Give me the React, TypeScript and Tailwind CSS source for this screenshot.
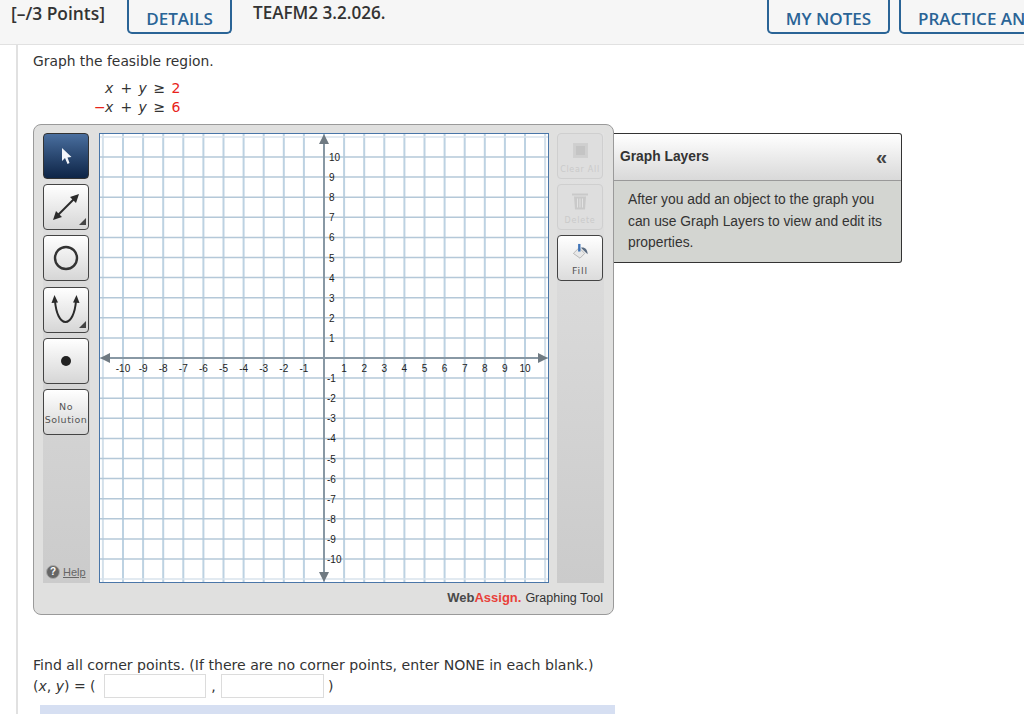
const verdana = "font-['DejaVu_Sans',sans-serif]";
const arial = "font-['Liberation_Sans',Arial,sans-serif]";

const ticks = [-11, -10, -9, -8, -7, -6, -5, -4, -3, -2, -1, 0, 1, 2, 3, 4, 5, 6, 7, 8, 9, 10, 11];
const labels = [-10, -9, -8, -7, -6, -5, -4, -3, -2, -1, 1, 2, 3, 4, 5, 6, 7, 8, 9, 10];
const STEP = 20.1;
const ORIGIN = 225;

const Graph = () => (
  <svg width="450" height="450" viewBox="0 0 450 450" className="block bg-white shrink-0">
    {ticks.map((t) => (
      <line
        key={`v${t}`}
        x1={ORIGIN + t * STEP}
        y1="0"
        x2={ORIGIN + t * STEP}
        y2="450"
        stroke={Math.abs(t) === 11 ? "#d3e0ea" : "#bdd2e2"}
        strokeWidth="2"
      />
    ))}
    {ticks.map((t) => (
      <line
        key={`h${t}`}
        x1="0"
        y1={ORIGIN + t * STEP}
        x2="450"
        y2={ORIGIN + t * STEP}
        stroke={Math.abs(t) === 11 ? "#d8e3ec" : "#b4c8d8"}
        strokeWidth="1.5"
      />
    ))}
    <rect x="0.5" y="0.5" width="449" height="449" fill="none" stroke="#4a76a8" />
    <line x1="225" y1="8" x2="225" y2="442" stroke="#8898a4" strokeWidth="2" />
    <line x1="8" y1="225" x2="442" y2="225" stroke="#8898a4" strokeWidth="2" />
    <path d="M225 1 L220 11 L230 11 Z M225 449 L220 439 L230 439 Z M1 225 L11 220 L11 230 Z M449 225 L439 220 L439 230 Z" fill="#6f7a82" />
    <g fontFamily="Liberation Sans, Arial, sans-serif" fontSize="10" fill="#222">
      {labels.map((n) => (
        <text key={`x${n}`} x={ORIGIN + n * STEP} y="239" textAnchor="middle">
          {n}
        </text>
      ))}
      {labels.map((n) => (
        <text key={`y${n}`} x={n < 0 ? 228 : 230} y={ORIGIN - n * STEP + 4}>
          {n}
        </text>
      ))}
    </g>
  </svg>
);

const ToolButton = ({ active, children }: { active?: boolean; children: React.ReactNode }) => (
  <div
    className={
      active
        ? "relative w-[46px] h-[46px] rounded-[4px] border border-[#333] bg-gradient-to-b from-[#4a6f9f] to-[#0e2547] flex items-center justify-center"
        : "relative w-[46px] h-[46px] rounded-[4px] border border-[#444] bg-gradient-to-b from-white to-[#d6d6d6] flex items-center justify-center"
    }
  >
    {children}
  </div>
);

const Corner = () => (
  <svg width="7" height="7" viewBox="0 0 7 7" className="absolute right-[2px] bottom-[4px]">
    <path d="M7 0 V7 H0 Z" fill="#444" />
  </svg>
);

const GraphTool = () => (
  <div className="w-[581px] h-[491px] shrink-0 border border-[#9a9a9a] rounded-[8px] bg-[#e0e0df] pt-[8px] px-[9px]">
    <div className="flex">
      <div className="w-[47px] h-[450px] bg-gradient-to-b from-[#e2e2e2] to-[#cbcbcb] flex flex-col gap-[5.2px] relative">
        <ToolButton active>
          <svg width="14" height="18" viewBox="0 0 14 18">
            <path d="M3 1 L3 14 L6 11 L8.5 17 L10.5 16 L8.5 10.5 L12.5 10 Z" fill="#f4f6fa" />
          </svg>
        </ToolButton>
        <ToolButton>
          <svg width="32" height="32" viewBox="0 0 32 32">
            <path d="M7 25 L25 7" stroke="#2b2b2b" strokeWidth="2" />
            <path d="M29 3 L20 6 L26 12 Z M3 29 L12 26 L6 20 Z" fill="#2b2b2b" />
          </svg>
          <Corner />
        </ToolButton>
        <ToolButton>
          <svg width="28" height="28" viewBox="0 0 28 28">
            <circle cx="14" cy="14" r="11" fill="none" stroke="#333" strokeWidth="2.4" />
          </svg>
        </ToolButton>
        <ToolButton>
          <svg width="34" height="34" viewBox="0 0 34 34">
            <path d="M6 8 C7 20 11 29 16.5 29 C22 29 26 20 27 8" fill="none" stroke="#2b2b2b" strokeWidth="2" />
            <path d="M5.5 2 L2.5 10 L9 9.5 Z M27.5 2 L24 9.5 L30.5 10 Z" fill="#2b2b2b" />
          </svg>
          <Corner />
        </ToolButton>
        <ToolButton>
          <div className="w-[10px] h-[10px] rounded-full bg-[#222]" />
        </ToolButton>
        <ToolButton>
          <span className={`${verdana} pt-[2px] text-[9.5px] leading-[13px] tracking-[0.5px] text-center text-[#555]`}>
            No
            <br />
            Solution
          </span>
        </ToolButton>
        <div className={`${arial} absolute left-[3px] bottom-[3px] flex items-center gap-[3px] text-[11px] text-[#666]`}>
          <span className={`${arial} w-[14px] h-[14px] rounded-full bg-[#666] border border-[#aaa] text-white text-[10px] font-bold flex items-center justify-center`}>
            ?
          </span>
          <span className="underline">Help</span>
        </div>
      </div>

      <div className="ml-[9px]">
        <Graph />
      </div>

      <div className="ml-[8px] w-[47px] h-[450px] bg-gradient-to-b from-[#e2e2e2] to-[#cbcbcb] flex flex-col gap-[5.2px]">
        <div className="w-[46px] h-[46px] rounded-[4px] border border-[#cfcfcf] bg-[#dedede] flex flex-col items-center pt-[9px]">
          <div className="w-[15px] h-[15px] border border-[#d0d0d0] bg-[#cfcfcf] p-[2px]">
            <div className="w-full h-full bg-[#c4c4c4]" />
          </div>
          <span className={`${verdana} mt-[6px] text-[8px] leading-[12px] tracking-[0.7px] whitespace-nowrap text-[#cacaca]`}>Clear All</span>
        </div>
        <div className="w-[46px] h-[46px] rounded-[4px] border border-[#cfcfcf] bg-[#dedede] flex flex-col items-center pt-[5px]">
          <svg width="18" height="21" viewBox="0 0 18 20">
            <path d="M1 3 H17 V5 H1 Z M3 6 H15 L14 19 H4 Z" fill="#c9c9c9" />
            <path d="M6.5 8 V17 M9 8 V17 M11.5 8 V17" stroke="#e2e2e2" />
          </svg>
          <span className={`${verdana} mt-[4px] text-[8px] leading-[12px] tracking-[0.8px] text-[#cacaca]`}>Delete</span>
        </div>
        <div className="w-[46px] h-[46px] rounded-[4px] border border-[#444] bg-gradient-to-b from-white to-[#dcdcdc] flex flex-col items-center pt-[7px]">
          <svg width="20" height="18" viewBox="0 0 20 19">
            <path d="M3 11 L9 5 L15 11 L10 16 Z" fill="#e8e8e8" stroke="#b5b5b5" />
            <path d="M8 1 H10.5 V9 H8 Z" fill="#3f74b8" />
            <path d="M11 5 C15 4 18 7 18 12 L15 9 Z" fill="#5a6b80" />
          </svg>
          <span className={`${verdana} mt-[2px] text-[9.5px] leading-[16px] tracking-[0.8px] text-[#555]`}>Fill</span>
        </div>
      </div>
    </div>
    <div className={`${arial} flex justify-end pr-[1px] pt-[7px] text-[13px] leading-[16px]`}>
      <span className="font-bold text-[#4a4a4a]">Web</span>
      <span className="font-bold text-[#e8403a]">Assign.</span>
      <span className="ml-[4px] text-[12.5px] text-[#333]">Graphing Tool</span>
    </div>
  </div>
);

const GraphLayers = () => (
  <div className={`${arial} w-[288px] h-[130px] mt-[9px] shrink-0 border border-l-0 border-[#333] rounded-r-[3px] bg-[#d3d5d1]`}>
    <div className="h-[47px] px-[6px] flex items-center justify-between bg-gradient-to-b from-white to-[#d9d9d9] border-b border-[#999] rounded-tr-[3px]">
      <span className="text-[13.8px] font-bold text-[#333]">Graph Layers</span>
      <span className="text-[20px] leading-[20px] font-bold text-[#444] mr-[8px]">«</span>
    </div>
    <p className="px-[14px] pt-[8px] text-[13.85px] leading-[21.5px] text-[#333]">
      After you add an object to the graph you can use Graph Layers to view and edit its properties.
    </p>
  </div>
);

const Tab = ({ children, className }: { children: React.ReactNode; className: string }) => (
  <div
    className={`h-[34px] pb-[2px] shrink-0 flex items-end justify-center border-2 border-t-0 border-[#2a6496] rounded-b-[5px] text-[#2a6496] text-[17px] font-semibold leading-[23px] whitespace-nowrap ${className}`}
  >
    {children}
  </div>
);

export default function App() {
  return (
    <div className="w-[1024px] h-[714px] overflow-hidden bg-white relative">
      <header className="h-[45px] bg-[#f6f6f6] border-b border-[#e1e1e1] flex items-start font-['Open_Sans',sans-serif] text-[#333]">
        <span className="ml-[11px] mt-[2px] w-[94px] shrink-0 text-[17.4px] leading-[22px] font-semibold whitespace-nowrap">[–/3 Points]</span>
        <Tab className="ml-[22px] w-[105px]">DETAILS</Tab>
        <span className="ml-[21px] mt-[2px] w-[133px] shrink-0 text-[17.1px] leading-[22px] font-semibold whitespace-nowrap">TEAFM2 3.2.026.</span>
        <Tab className="ml-[381px] w-[123px]">MY NOTES</Tab>
        <Tab className="ml-[9px] w-[200px] !justify-start pl-[17px]">PRACTICE ANOTHER</Tab>
      </header>

      <main className={`${verdana} ml-[16px] h-[669px] border-l-2 border-[#e1e1e1] pl-[15px] text-[#333]`}>
        <p className="pt-[7px] text-[13.85px] leading-[19px]">Graph the feasible region.</p>
        <div className="mt-[8px] ml-[61px] text-[14px] leading-[19px]">
          <div className="grid grid-cols-[11px_15.5px_18px_15px_18px_10px] justify-items-start">
            <span />
            <i>x</i>
            <span>+</span>
            <i>y</i>
            <span>≥</span>
            <span className="text-[#e8231a]">2</span>
            <span className="text-[#e8231a]">−</span>
            <i>x</i>
            <span>+</span>
            <i>y</i>
            <span>≥</span>
            <span className="text-[#e8231a]">6</span>
          </div>
        </div>
        <div className="flex mt-[7px]">
          <GraphTool />
          <GraphLayers />
        </div>
        <p className="mt-[41px] text-[14.1px] leading-[19px]">
          Find all corner points. (If there are no corner points, enter NONE in each blank.)
        </p>
        <div className="-mt-[1px] flex items-center text-[14px] leading-[24px]">
          <span className="w-[71px]">
            (<i>x</i>, <i>y</i>) = (
          </span>
          <div className="w-[102px] h-[24px] border border-[#dcdcdc]" />
          <span className="w-[15px] text-center">,</span>
          <div className="w-[103px] h-[24px] border border-[#dcdcdc]" />
          <span className="ml-[4px]">)</span>
        </div>
        <div className="mt-[7px] ml-[7px] w-[575px] h-[20px] bg-[#d6dff2]" />
      </main>
    </div>
  );
}
